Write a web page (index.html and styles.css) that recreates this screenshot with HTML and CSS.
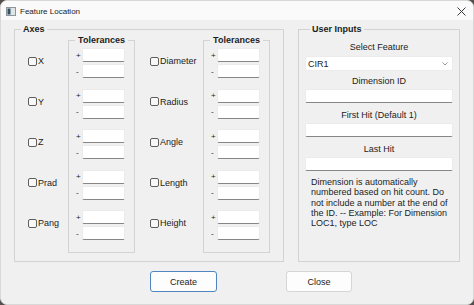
FILE: index.html
```html
<!DOCTYPE html>
<html lang="en">
<head>
  <meta charset="UTF-8" />
  <meta name="viewport" content="width=device-width, initial-scale=1.0"/>
  <title>Feature Location</title>
  <link rel="stylesheet" href="styles.css">
</head>
<body>
  <div class="window">
    <div class="title-bar">
      <svg class="app-icon" width="10" height="9" viewBox="0 0 10 9">
        <rect x="0.5" y="0.5" width="9" height="8" fill="#e2e5e8" stroke="#8d959c"/>
        <rect x="1.5" y="1.5" width="3" height="6" fill="#2f5462"/>
      </svg>
      <span class="title">Feature Location</span>
      <svg class="close-x" width="9" height="9" viewBox="0 0 9 9">
        <path d="M0.5 0.5 L8.5 8.5 M8.5 0.5 L0.5 8.5" stroke="#3a3a3a" stroke-width="1"/>
      </svg>
    </div>

    <div class="client">
      <div class="groups">
        <fieldset class="group axes">
          <legend>Axes</legend>

          <div class="axis-labels first">
            <label class="check"><input type="checkbox">X</label>
            <label class="check"><input type="checkbox">Y</label>
            <label class="check"><input type="checkbox">Z</label>
            <label class="check"><input type="checkbox">Prad</label>
            <label class="check"><input type="checkbox">Pang</label>
          </div>

          <fieldset class="tol">
            <legend>Tolerances</legend>
            <div class="tol-pair">
              <div class="tol-row"><span class="sign">+</span><input type="text"></div>
              <div class="tol-row"><span class="sign">-</span><input type="text"></div>
            </div>
            <div class="tol-pair">
              <div class="tol-row"><span class="sign">+</span><input type="text"></div>
              <div class="tol-row"><span class="sign">-</span><input type="text"></div>
            </div>
            <div class="tol-pair">
              <div class="tol-row"><span class="sign">+</span><input type="text"></div>
              <div class="tol-row"><span class="sign">-</span><input type="text"></div>
            </div>
            <div class="tol-pair">
              <div class="tol-row"><span class="sign">+</span><input type="text"></div>
              <div class="tol-row"><span class="sign">-</span><input type="text"></div>
            </div>
            <div class="tol-pair">
              <div class="tol-row"><span class="sign">+</span><input type="text"></div>
              <div class="tol-row"><span class="sign">-</span><input type="text"></div>
            </div>
          </fieldset>

          <div class="axis-labels second">
            <label class="check"><input type="checkbox">Diameter</label>
            <label class="check"><input type="checkbox">Radius</label>
            <label class="check"><input type="checkbox">Angle</label>
            <label class="check"><input type="checkbox">Length</label>
            <label class="check"><input type="checkbox">Height</label>
          </div>

          <fieldset class="tol">
            <legend>Tolerances</legend>
            <div class="tol-pair">
              <div class="tol-row"><span class="sign">+</span><input type="text"></div>
              <div class="tol-row"><span class="sign">-</span><input type="text"></div>
            </div>
            <div class="tol-pair">
              <div class="tol-row"><span class="sign">+</span><input type="text"></div>
              <div class="tol-row"><span class="sign">-</span><input type="text"></div>
            </div>
            <div class="tol-pair">
              <div class="tol-row"><span class="sign">+</span><input type="text"></div>
              <div class="tol-row"><span class="sign">-</span><input type="text"></div>
            </div>
            <div class="tol-pair">
              <div class="tol-row"><span class="sign">+</span><input type="text"></div>
              <div class="tol-row"><span class="sign">-</span><input type="text"></div>
            </div>
            <div class="tol-pair">
              <div class="tol-row"><span class="sign">+</span><input type="text"></div>
              <div class="tol-row"><span class="sign">-</span><input type="text"></div>
            </div>
          </fieldset>
        </fieldset>

        <fieldset class="group user">
          <legend>User Inputs</legend>

          <div class="field-label top">Select Feature</div>
          <div class="combo">
            <span>CIR1</span>
            <svg width="6" height="4" viewBox="0 0 6 4">
              <path d="M0.5 0.5 L3 3 L5.5 0.5" fill="none" stroke="#8a8a8a" stroke-width="0.9"/>
            </svg>
          </div>

          <div class="field-label after-combo">Dimension ID</div>
          <input class="field" type="text">

          <div class="field-label">First Hit (Default 1)</div>
          <input class="field" type="text">

          <div class="field-label">Last Hit</div>
          <input class="field" type="text">

          <p class="note">Dimension is automatically numbered based on hit count. Do not include a number at the end of the ID. -- Example: For Dimension LOC1, type LOC</p>
        </fieldset>
      </div>

      <div class="buttons">
        <button class="btn default">Create</button>
        <button class="btn">Close</button>
      </div>
    </div>
  </div>
</body>
</html>
```

FILE: styles.css
```css
html, body {
  margin: 0;
  padding: 0;
}

body {
  background-color: #55504d;
  font-family: "Liberation Sans", Arial, sans-serif;
  font-size: 9px;
  color: #1c1c1c;
}

.window {
  width: 474px;
  height: 305px;
  box-sizing: border-box;
  background-color: #f0f0f0;
  border: 1px solid #d8d8d8;
  border-radius: 7px;
  overflow: hidden;
}

.title-bar {
  height: 17px;
  background-color: #fafafa;
  display: flex;
  align-items: center;
  padding: 2px 7px 0 5px;
}

.app-icon {
  margin-right: 4px;
}

.title {
  flex: 1;
  font-size: 8px;
  color: #1a1a1a;
}

.client {
  padding: 4px 13px 0;
}

.groups {
  display: flex;
  gap: 14px;
}

/* group boxes */
.group {
  margin: 0;
  padding: 0;
  min-width: 0;
  border: 1px solid #d3d3d3;
  box-sizing: border-box;
}

.group > legend {
  font-weight: bold;
  line-height: 10px;
  padding: 0 2px;
}

.axes {
  width: 270px;
  display: flex;
  padding: 0 13px 8px 0;
}

.axes > legend {
  margin-left: 6px;
}

.axis-labels {
  display: flex;
  flex-direction: column;
  gap: 14.5px;
  padding-top: 14px;
  box-sizing: border-box;
}

.axis-labels.first {
  width: 53px;
  padding-left: 13px;
}

.axis-labels.second {
  width: 68px;
  padding-left: 15px;
}

.check {
  height: 26px;
  display: flex;
  align-items: center;
  white-space: nowrap;
}

.check input {
  appearance: none;
  width: 9px;
  height: 9px;
  margin: 0 1px 0 0;
  border: 1px solid #5e5e5e;
  border-radius: 2px;
  background-color: #f8f8f8;
  box-sizing: border-box;
}

/* tolerance boxes */
.tol {
  width: 67px;
  box-sizing: border-box;
  margin: 0;
  padding: 2px 0 12px 0;
  min-width: 0;
  border: 1px solid #d3d3d3;
  display: flex;
  flex-direction: column;
  gap: 10.5px;
}

.tol > legend {
  font-weight: bold;
  line-height: 12px;
  padding: 0 3px;
  margin: 0 auto;
}

.tol-pair {
  display: flex;
  flex-direction: column;
  gap: 2px;
  padding-left: 7px;
}

.tol-row {
  display: flex;
  align-items: center;
  height: 14px;
}

.sign {
  width: 6px;
  font-size: 8px;
}

.tol-row input,
.field {
  height: 14px;
  box-sizing: border-box;
  margin: 0;
  padding: 0 2px;
  border: 1px solid #ebebeb;
  border-bottom-color: #868686;
  border-radius: 2px;
  background-color: #ffffff;
  font: inherit;
}

.tol-row input {
  width: 43px;
}

/* user inputs */
.user {
  width: 162px;
  display: flex;
  flex-direction: column;
  padding: 0 6px;
}

.user > legend {
  margin-left: 5px;
}

.field-label {
  line-height: 12px;
  text-align: center;
  margin: 6px 0 2px;
  white-space: nowrap;
}

.field-label.top {
  margin: 7px 0 3px;
}

.field-label.after-combo {
  margin-top: 4px;
}

.combo {
  height: 15px;
  box-sizing: border-box;
  display: flex;
  align-items: center;
  justify-content: space-between;
  padding: 0 4px 0 2px;
  background-color: #ffffff;
  border: 1px solid #ececec;
  border-radius: 2px;
}

.field {
  width: 100%;
}

.note {
  margin: 6px 0 0;
  padding-left: 6px;
  width: 142px;
  line-height: 10.25px;
}

/* bottom buttons */
.buttons {
  display: flex;
  gap: 69px;
  padding-left: 136px;
  margin-top: 9px;
}

.btn {
  width: 66px;
  height: 21px;
  margin: 0;
  padding: 0;
  font: inherit;
  color: #1c1c1c;
  background-color: #fdfdfd;
  border: 1px solid #d5d5d5;
  border-radius: 3px;
}

.btn.default {
  width: 67px;
  border-color: #4f86c0;
}
```
